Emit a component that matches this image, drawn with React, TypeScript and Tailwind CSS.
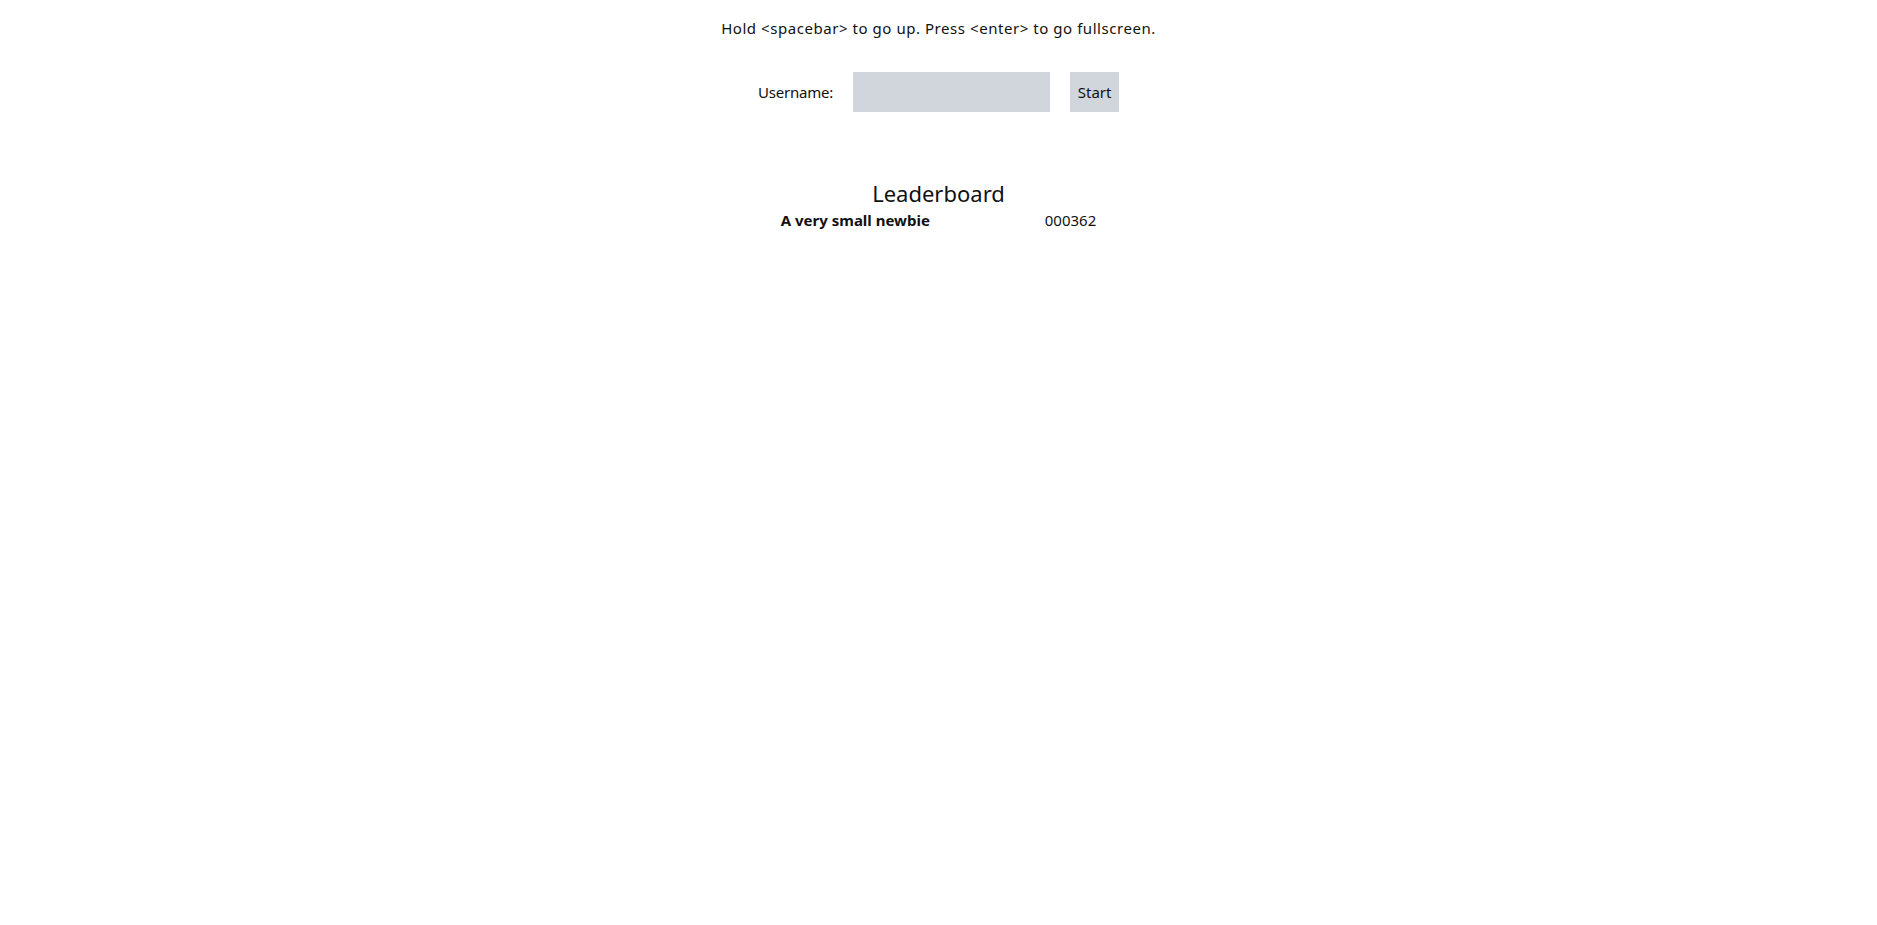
export default function App() {
  return (
    <div className="min-h-screen bg-white text-[#111] font-['Noto_Sans',sans-serif]">
      <div className="flex flex-col items-center pt-[17px]">
        <p className="text-[15px] leading-[22px] tracking-[0.55px]">Hold &lt;spacebar&gt; to go up. Press &lt;enter&gt; to go fullscreen.</p>

        <form className="mt-[33px] flex items-center gap-[20px]" onSubmit={(e) => e.preventDefault()}>
          <label htmlFor="username" className="text-[15px] tracking-[-0.2px]">Username:</label>
          <input id="username" type="text" className="h-[40px] w-[197px] bg-gray-300 px-2 outline-none" />
          <button type="submit" className="h-[40px] w-[49px] bg-gray-300 text-[15px]">Start</button>
        </form>

        <div className="mt-[65px] flex flex-col items-center">
          <h2 className="text-[22px] leading-[32px]">Leaderboard</h2>
          <table className="text-[15px]">
            <tbody>
              <tr>
                <td className="w-[264px] text-left font-bold">A very small newbie</td>
                <td className="text-left">000362</td>
              </tr>
            </tbody>
          </table>
        </div>
      </div>
    </div>
  );
}
